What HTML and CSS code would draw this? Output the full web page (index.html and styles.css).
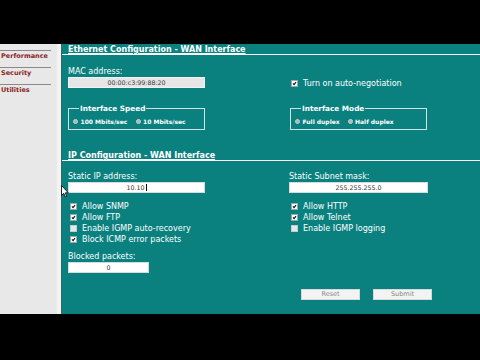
FILE: index.html
```html
<!DOCTYPE html>
<html>
<head>
<meta charset="utf-8">
<link rel="stylesheet" href="styles.css">
</head>
<body>
<div class="screen">
  <nav class="side">
    <div class="item">Performance</div>
    <div class="item">Security</div>
    <div class="item">Utilities</div>
  </nav>
  <main class="main">
    <h2 class="head"><span>Ethernet Configuration - WAN Interface</span></h2>
    <div class="sec sec1">
      <div class="field">
        <div class="lbl">MAC address:</div>
        <input class="inp ro w137" type="text" value="00:00:c3:99:88:20" readonly>
      </div>
      <div class="chk end"><span class="cb"><svg viewBox="0 0 7 7"><path d="M1.3 3.4 L2.9 5 L5.6 1.6"/></svg></span>Turn on auto-negotiation</div>
      <fieldset class="fs">
        <legend>Interface Speed</legend>
        <div class="opts"><span class="rd"></span><span class="opt w55">100 Mbits/sec</span><span class="rd"></span><span class="opt">10 Mbits/sec</span></div>
      </fieldset>
      <fieldset class="fs fs-r">
        <legend>Interface Mode</legend>
        <div class="opts"><span class="rd"></span><span class="opt w45">Full duplex</span><span class="rd"></span><span class="opt">Half duplex</span></div>
      </fieldset>
    </div>
    <h2 class="head head2"><span>IP Configuration - WAN Interface</span></h2>
    <div class="sec sec2">
      <div class="field">
        <div class="lbl">Static IP address:</div>
        <div class="inp w137 caretbox">10.10<span class="caret"></span></div>
      </div>
      <div class="field">
        <div class="lbl">Static Subnet mask:</div>
        <input class="inp w139" type="text" value="255.255.255.0" readonly>
      </div>
      <div class="checks">
        <div class="chk"><span class="cb"><svg viewBox="0 0 7 7"><path d="M1.3 3.4 L2.9 5 L5.6 1.6"/></svg></span>Allow SNMP</div>
        <div class="chk"><span class="cb"><svg viewBox="0 0 7 7"><path d="M1.3 3.4 L2.9 5 L5.6 1.6"/></svg></span>Allow FTP</div>
        <div class="chk"><span class="cb off"></span>Enable IGMP auto-recovery</div>
        <div class="chk"><span class="cb"><svg viewBox="0 0 7 7"><path d="M1.3 3.4 L2.9 5 L5.6 1.6"/></svg></span>Block ICMP error packets</div>
      </div>
      <div class="checks">
        <div class="chk"><span class="cb"><svg viewBox="0 0 7 7"><path d="M1.3 3.4 L2.9 5 L5.6 1.6"/></svg></span>Allow HTTP</div>
        <div class="chk"><span class="cb"><svg viewBox="0 0 7 7"><path d="M1.3 3.4 L2.9 5 L5.6 1.6"/></svg></span>Allow Telnet</div>
        <div class="chk"><span class="cb off"></span>Enable IGMP logging</div>
      </div>
      <div class="field blocked">
        <div class="lbl">Blocked packets:</div>
        <input class="inp w81" type="text" value="0" readonly>
      </div>
    </div>
    <div class="btns">
      <button class="btn" type="button">Reset</button>
      <button class="btn" type="button">Submit</button>
    </div>
    <svg class="cursor" viewBox="0 0 8 13" width="8" height="13"><path d="M0.5 0.5 L0.5 10.5 L2.8 8.3 L4.4 12 L5.8 11.4 L4.3 7.8 L7.3 7.8 Z" fill="#fff" stroke="#000" stroke-width="0.8"/></svg>
  </main>
</div>
</body>
</html>
```
FILE: styles.css
```css
html, body {
  margin: 0;
  padding: 0;
}
body {
  background: #000;
  width: 480px;
  height: 360px;
  overflow: hidden;
  font-family: "DejaVu Sans", Verdana, sans-serif;
}
.screen {
  margin-top: 44px;
  height: 270px;
  display: flex;
}
.side {
  width: 57px;
  background: #e8e8e8;
  border-right: 4px solid #f3f3f3;
  padding-top: 6px;
}
.item {
  width: 50px;
  border-top: 1px solid #8a8a8a;
  padding: 1px 0 6px 1px;
  font-size: 6.5px;
  line-height: 9px;
  font-weight: bold;
  color: #8b1e1e;
}
.main {
  flex: 1;
  background: #0a817f;
  color: #fff;
  position: relative;
  border-left: 1px solid #3e6261;
}
.head {
  margin: 0;
  height: 10px;
  line-height: 11px;
  font-size: 8px;
  font-weight: bold;
  padding-left: 6px;
  border-bottom: 1px solid #fff;
}
.head span {
  text-decoration: underline;
}
.head2 {
  margin-top: 20px;
}
.sec {
  display: grid;
  grid-template-columns: 221px 1fr;
  padding-left: 6px;
}
.sec1 {
  padding-top: 12px;
  row-gap: 16px;
}
.sec2 {
  padding-top: 11px;
}
.lbl {
  font-size: 8px;
  line-height: 10px;
}
.inp {
  display: block;
  box-sizing: border-box;
  height: 11px;
  margin: 0;
  padding: 0;
  border: 1px solid #d6dcdc;
  background: #fff;
  color: #333;
  font-family: "DejaVu Sans", Verdana, sans-serif;
  font-size: 6.3px;
  line-height: 9px;
  text-align: center;
  outline: none;
}
.ro {
  background: #e6e6e6;
  border-color: #f2f2f2;
}
.w137 { width: 137px; }
.w139 { width: 139px; }
.w81 { width: 81px; }
.caretbox {
  display: flex;
  justify-content: center;
  align-items: center;
}
.caret {
  display: inline-block;
  width: 1px;
  height: 7px;
  background: #000;
  margin-left: 1px;
}
.chk {
  display: flex;
  align-items: center;
  height: 11px;
  font-size: 8px;
  padding-left: 2px;
}
.end {
  align-self: end;
  height: 10px;
}
.cb {
  width: 7px;
  height: 7px;
  box-sizing: border-box;
  margin-right: 5px;
  background: #fff;
  border: 1px solid #9aa;
  display: flex;
}
.cb svg {
  width: 5px;
  height: 5px;
}
.cb path {
  fill: none;
  stroke: #111;
  stroke-width: 1.6;
}
.cb.off {
  background: #e4e8e8;
  border-color: #c4cccc;
}
.checks {
  margin-top: 7.5px;
}
.blocked {
  margin-top: 7px;
}
.fs {
  margin: 0;
  width: 137px;
  box-sizing: border-box;
  padding: 4px 0 3px 4px;
  border: 1px solid #cfe3e2;
}
.fs-r {
  margin-left: 1px;
}
.fs legend {
  margin-left: 6px;
  padding: 0 1px;
  font-size: 7.3px;
  line-height: 9px;
  font-weight: bold;
}
.opts {
  display: flex;
  align-items: center;
  height: 9px;
  font-size: 6px;
  font-weight: bold;
}
.rd {
  width: 5px;
  height: 5px;
  box-sizing: border-box;
  border-radius: 50%;
  background: #a9b8b7;
  border: 1px solid #c8d2d2;
  margin-right: 2.5px;
}
.w55 { width: 55px; }
.w45 { width: 45px; }
.btns {
  display: flex;
  gap: 13px;
  margin: 16px 0 0 239px;
}
.btn {
  width: 59px;
  height: 11px;
  padding: 0;
  margin: 0;
  box-sizing: border-box;
  background: #f3f3f3;
  border: 1px solid #d5dada;
  color: #888;
  font-family: "DejaVu Sans", Verdana, sans-serif;
  font-size: 6.5px;
  line-height: 9px;
}
.cursor {
  position: absolute;
  left: -1px;
  top: 141px;
}
```
